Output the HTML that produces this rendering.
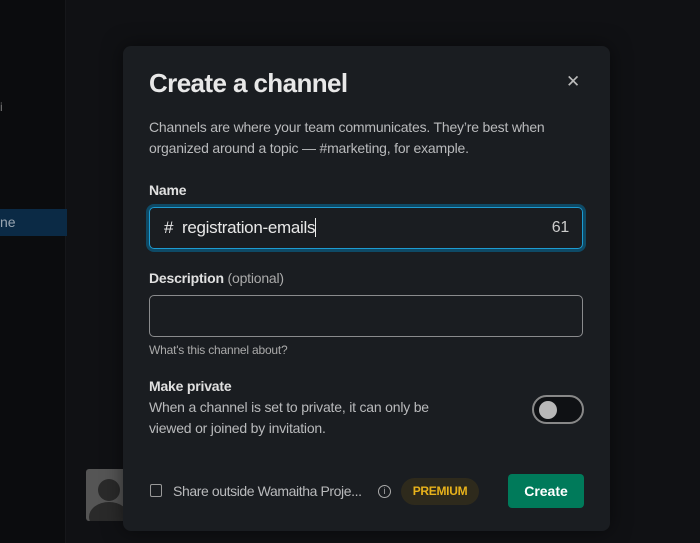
<!DOCTYPE html>
<html><head><style>
*{box-sizing:border-box;margin:0;padding:0}
body{width:700px;height:543px;overflow:hidden;background:#101114;font-family:"Liberation Sans",sans-serif;position:relative;color:#d1d2d3}
.side{position:absolute;left:0;top:0;width:66px;height:543px;background:#0b0c0e;border-right:1px solid #16171a}
.sel{position:absolute;left:0;top:209px;width:67px;height:27px;background:#0b2a45;color:#9aa6b2;font-size:14px;line-height:27px}
.avatar{position:absolute;left:86px;top:469px;width:40px;height:52px;background:#555;border-radius:3px;overflow:hidden}
.modal{position:absolute;left:123px;top:46px;width:487px;height:485px;background:#1a1d21;border-radius:8px;box-shadow:0 0 20px rgba(0,0,0,.5)}
h1{position:absolute;left:26px;top:22px;font-size:26px;font-weight:bold;color:#e8e8e8;letter-spacing:-0.6px}
.x{position:absolute;left:443px;top:26px;font-size:17px;color:#bbb}
.p{position:absolute;left:26px;font-size:14px;line-height:21px;color:#b9babc;letter-spacing:-0.2px}
.lbl{position:absolute;left:26px;font-size:14px;font-weight:bold;color:#e0e0e0;letter-spacing:-0.2px}
.in{position:absolute;left:26px;width:434px;height:42px;border:1px solid #8a8b8d;border-radius:5px}
.in.f{border:1px solid #1d9bd1;box-shadow:0 0 0 3px #0e4a66;top:161px;font-size:17px;color:#e8e8e8;line-height:40px;padding-left:14px;letter-spacing:-0.3px}
.tog{position:absolute;left:409px;top:349px;width:52px;height:29px;border:2px solid #888;border-radius:15px;background:#0f1114}
.tog i{position:absolute;left:5px;top:4px;width:18px;height:18px;border-radius:50%;background:#b8b8b8}
.cb{position:absolute;left:27px;top:438px;width:12px;height:13px;border:1px solid #999;border-radius:2px}
.prem{position:absolute;left:278px;top:432px;width:78px;height:27px;border-radius:14px;background:#2e2a1c;color:#e8b21b;font-size:12px;font-weight:bold;text-align:center;line-height:27px;letter-spacing:-0.3px}
.btn{position:absolute;left:385px;top:428px;width:76px;height:34px;border-radius:4px;background:#007a5a;color:#fff;font-weight:bold;font-size:14px;text-align:center;line-height:34px}
</style></head><body>
<div class="side"></div>
<div style="position:absolute;left:0;top:100px;font-size:12px;color:#777">i</div>
<div class="sel">ne</div>
<div class="avatar"><div style="position:absolute;left:12px;top:10px;width:22px;height:22px;border-radius:50%;background:#2a2a2a"></div><div style="position:absolute;left:3px;top:33px;width:40px;height:30px;border-radius:50%;background:#2a2a2a"></div></div>
<div class="modal">
<h1>Create a channel</h1>
<div class="x">✕</div>
<div class="p" style="top:71px">Channels are where your team communicates. They’re best when<br>organized around a topic — #marketing, for example.</div>
<div class="lbl" style="top:136px">Name</div>
<div class="in f"># &nbsp;registration-emails<span style="border-left:1px solid #eee"></span><span style="position:absolute;right:13px;color:#ccc;font-size:16px">61</span></div>
<div class="lbl" style="top:224px">Description <span style="font-weight:normal;color:#aaa">(optional)</span></div>
<div class="in" style="top:249px"></div>
<div class="p" style="top:294px;font-size:12px;color:#aaa">What's this channel about?</div>
<div class="lbl" style="top:332px">Make private</div>
<div class="p" style="top:351px">When a channel is set to private, it can only be<br>viewed or joined by invitation.</div>
<div class="tog"><i></i></div>
<div class="cb"></div>
<div class="p" style="top:435px;left:50px;letter-spacing:-0.4px">Share outside Wamaitha Proje...</div>
<div style="position:absolute;left:255px;top:439px;width:13px;height:13px;border:1.3px solid #aaa;border-radius:50%;font-size:9px;text-align:center;line-height:11px;color:#aaa">i</div>
<div class="prem">PREMIUM</div>
<div class="btn">Create</div>
</div>
</body></html>
